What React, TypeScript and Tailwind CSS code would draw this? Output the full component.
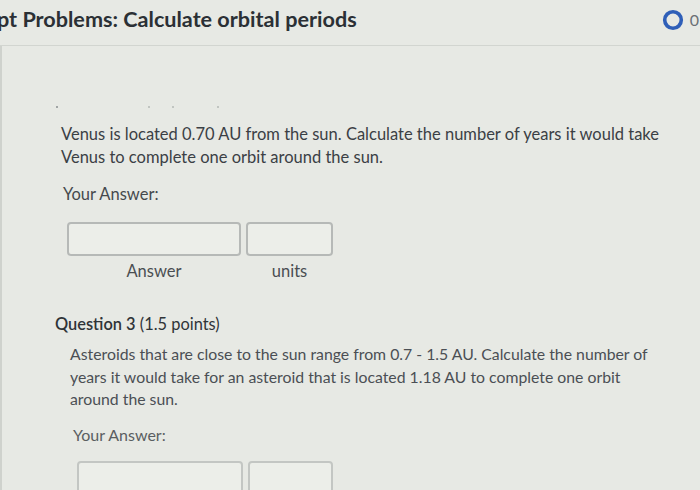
export default function App() {
  return (
    <div
      className="w-[700px] h-[490px] overflow-hidden bg-[#e7e9e4] text-[#3b4045]"
      style={{ fontFamily: "Lato, 'Open Sans', sans-serif" }}
    >
      {/* header */}
      <div className="h-[46px] flex items-start justify-between border-b border-[#d2d5d0]">
        <h1 className="ml-[-3px] mt-[3px] text-[21.6px] font-bold text-[#2b3035] whitespace-nowrap">
          pt Problems: Calculate orbital periods
        </h1>
        <div className="flex items-center gap-[6px] mt-[8px] mr-[1px]">
          <svg width="22" height="22" viewBox="0 0 22 22">
            <circle cx="11" cy="11" r="8.3" fill="none" stroke="#2f5fb8" strokeWidth="3.6" />
          </svg>
          <span className="text-[16px] text-[#6b7075]">0</span>
        </div>
      </div>

      <div className="border-l-2 border-[#cfd2cd] h-[444px]">
        {/* stray specks */}
        <div className="h-[77px] pt-[60px] flex items-start pl-[54px]">
          <span className="w-[2px] h-[2px] rounded-full bg-[#8a8e90]" />
          <span className="w-[2px] h-[2px] rounded-full bg-[#b5b8b6] ml-[90px]" />
          <span className="w-[2px] h-[2px] rounded-full bg-[#b5b8b6] ml-[22px]" />
          <span className="w-[2px] h-[2px] rounded-full bg-[#b5b8b6] ml-[43px]" />
        </div>

        <div className="pl-[59px]">
          <p className="text-[16.5px] leading-[23px] w-[620px]">
            Venus is located 0.70 AU from the sun. Calculate the number of years it would take
            Venus to complete one orbit around the sun.
          </p>
          <p className="text-[16.5px] leading-[23px] mt-[14px] ml-[2px] text-[#45494d]">Your Answer:</p>

          <div className="flex gap-[5px] ml-[6px] mt-[16px]">
            <div className="flex flex-col items-center">
              <div className="w-[174px] h-[34px] rounded-[4px] border-2 border-[#b6b9b7] bg-[#eceee9]" />
              <span className="text-[16.5px] leading-[20px] mt-[5px] text-[#4a4e52]">Answer</span>
            </div>
            <div className="flex flex-col items-center">
              <div className="w-[87px] h-[34px] rounded-[4px] border-2 border-[#b6b9b7] bg-[#eceee9]" />
              <span className="text-[16.5px] leading-[20px] mt-[5px] text-[#4a4e52]">units</span>
            </div>
          </div>
        </div>

        <div className="pl-[53px] mt-[32px]">
          <p className="text-[16.4px] leading-[22px] text-[#2f3438]">
            <span className="font-semibold">Question 3</span> (1.5 points)
          </p>
          <div className="pl-[15px]">
            <p className="text-[15.8px] leading-[22.5px] mt-[8px] w-[590px] text-[#4b4f54]">
              Asteroids that are close to the sun range from 0.7 - 1.5 AU. Calculate the number of
              years it would take for an asteroid that is located 1.18 AU to complete one orbit
              around the sun.
            </p>
            <p className="text-[16px] leading-[22px] mt-[13px] ml-[3px] text-[#5a5e61]">Your Answer:</p>
            <div className="flex gap-[5px] mt-[15px] ml-[7px]">
              <div className="w-[166px] h-[35px] rounded-[4px] border-2 border-[#c3c6c3] bg-[#eceee9]" />
              <div className="w-[85px] h-[35px] rounded-[4px] border-2 border-[#c3c6c3] bg-[#eceee9]" />
            </div>
          </div>
        </div>
      </div>
    </div>
  );
}
